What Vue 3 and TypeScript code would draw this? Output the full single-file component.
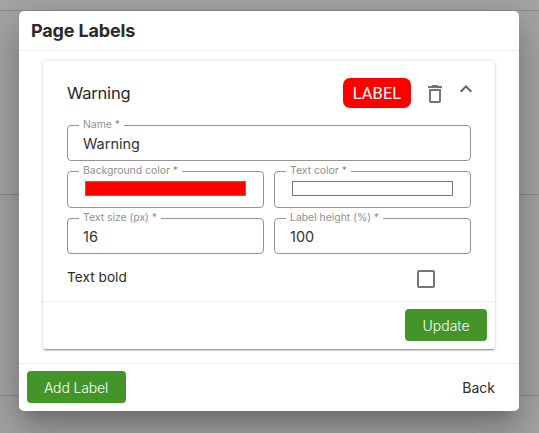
<script setup lang="ts">
const rowTwo = [
  { label: 'Background color *', swatch: 'red' },
  { label: 'Text color *', swatch: 'white' },
];
const rowThree = [
  { label: 'Text size (px) *', value: '16' },
  { label: 'Label height (%) *', value: '100' },
];
</script>

<template>
  <div class="backdrop">
    <section class="dialog">
      <header class="dialog-head">Page Labels</header>
      <div class="dialog-body">
        <article class="card">
          <div class="card-head">
            <span class="card-title">Warning</span>
            <span class="badge">LABEL</span>
            <svg class="trash" viewBox="0 0 24 24" width="24" height="24"><path d="M6 19a2 2 0 0 0 2 2h8a2 2 0 0 0 2-2V7H6v12zM8 9h8v10H8V9zm7.500-5-1-1h-5l-1 1H5v2h14V4h-3.500z" /></svg>
            <svg class="chevron" viewBox="0 0 24 24" width="24" height="24"><path d="M12 8l-6 6 1.410 1.410L12 10.830l4.590 4.580L18 14z" /></svg>
          </div>
          <div class="form">
            <fieldset class="field">
              <legend>Name *</legend>
              <span class="value">Warning</span>
            </fieldset>
            <div class="pair">
              <fieldset v-for="f in rowTwo" :key="f.label" class="field colour">
                <legend>{{ f.label }}</legend>
                <span class="swatch" :class="f.swatch"></span>
              </fieldset>
            </div>
            <div class="pair">
              <fieldset v-for="f in rowThree" :key="f.label" class="field">
                <legend>{{ f.label }}</legend>
                <span class="value">{{ f.value }}</span>
              </fieldset>
            </div>
            <div class="bold-row">
              <span class="bold-label">Text bold</span>
              <span class="checkbox"></span>
            </div>
          </div>
          <div class="card-foot">
            <button class="btn update">Update</button>
          </div>
        </article>
      </div>
      <footer class="dialog-foot">
        <button class="btn add">Add Label</button>
        <button class="back">Back</button>
      </footer>
    </section>
  </div>
</template>

<style scoped>
.backdrop {
  width: 539px;
  height: 433px;
  box-sizing: border-box;
  padding: 11px 20px 22px 19px;
  background:
    linear-gradient(#8c8c8c, #8c8c8c) 0 10px / 100% 1px no-repeat,
    linear-gradient(#8c8c8c, #8c8c8c) 0 194px / 100% 1px no-repeat,
    linear-gradient(#8c8c8c, #8c8c8c) 0 395px / 100% 1px no-repeat,
    #a5a5a5;
  font-family: "Inter", "Liberation Sans", sans-serif;
  color: #2a2a2a;
  overflow: hidden;
}
.dialog {
  width: 500px;
  height: 400px;
  background: #fff;
  border-radius: 5px;
  display: flex;
  flex-direction: column;
  box-shadow: 0 11px 15px -7px rgba(0,0,0,.2), 0 24px 38px 3px rgba(0,0,0,.14), 0 9px 46px 8px rgba(0,0,0,.12);
}
.dialog-head {
  height: 40px;
  box-sizing: border-box;
  padding: 8px 12px 0;
  font-size: 18px;
  font-weight: 700;
  line-height: 24px;
  letter-spacing: -0.15px;
  border-bottom: 1px solid #eee;
}
.dialog-body {
  flex: 1;
  padding: 10px 24px 0;
}
.card {
  height: 288px;
  background: #fff;
  border-radius: 2px;
  box-shadow: 0 2px 2px -1px rgba(0,0,0,.35), 0 1px 2px rgba(0,0,0,.14), 0 0 4px rgba(0,0,0,.12);
  display: flex;
  flex-direction: column;
}
.card-head {
  display: flex;
  align-items: center;
  height: 59px;
  padding-left: 24px;
}
.card-title {
  flex: 1;
  font-size: 16.500px;
  line-height: 24px;
  letter-spacing: -0.2px;
  padding-top: 5px;
}
.badge {
  width: 68px;
  height: 30px;
  margin: 5px 0 0 0;
  border-radius: 7px;
  background: #f00;
  color: #fff;
  font-family: "Roboto", sans-serif;
  font-size: 16.500px;
  line-height: 32px;
  text-align: center;
}
.trash {
  fill: #757575;
  margin: 6px 0 0 12px;
}
.chevron {
  fill: #616161;
  margin: -3px 17px 0 7px;
}
.form {
  display: flex;
  flex-direction: column;
  gap: 5px;
  padding: 0 24px;
}
.field {
  margin: 0;
  min-width: 0;
  box-sizing: border-box;
  height: 41px;
  padding: 0 15px;
  border: 1px solid #949494;
  border-radius: 4px;
}
.pair .field {
  flex: 1;
}
.field.colour {
  height: 42px;
}
.field legend {
  padding: 0 4px;
  margin-left: -4px;
  font-size: 10.500px;
  line-height: 10px;
  color: #909090;
  letter-spacing: -0.05px;
}
.value {
  display: block;
  font-size: 14.500px;
  line-height: 20px;
  padding-top: 4px;
  color: #333;
}
.swatch {
  display: block;
  height: 15px;
  margin: 5px 2px 0 2px;
  border: 1px solid #767676;
  box-sizing: border-box;
}
.swatch.red { background: #f00; }
.swatch.white { background: #fff; }
.pair {
  display: flex;
  gap: 10px;
}
.bold-row {
  display: flex;
  justify-content: space-between;
  align-items: center;
  height: 47px;
  font-size: 13.700px;
  padding-right: 36px;
  margin-top: -5px;
}
.bold-label {
  margin-top: -2px;
}
.checkbox {
  width: 18px;
  height: 18px;
  box-sizing: border-box;
  border: 2px solid #757575;
  border-radius: 2px;
  margin-top: 2px;
}
.card-foot {
  border-top: 1px solid #eee;
  padding: 7px 8px 8px;
  display: flex;
  justify-content: flex-end;
}
.btn {
  border: none;
  border-radius: 4px;
  background: #43952a;
  color: #fff;
  font-family: inherit;
  font-size: 14px;
  font-weight: 300;
  height: 32px;
  padding: 0;
}
.update { width: 82px; }
.add { width: 99px; letter-spacing: -0.15px; padding-right: 1px; }
.dialog-foot {
  height: 48px;
  box-sizing: border-box;
  border-top: 1px solid #eee;
  padding: 7px 24px 0 8px;
  display: flex;
  justify-content: space-between;
}
.back {
  border: none;
  background: none;
  font-family: inherit;
  font-size: 14px;
  color: #2a2a2a;
  height: 32px;
  padding: 0;
}
</style>
